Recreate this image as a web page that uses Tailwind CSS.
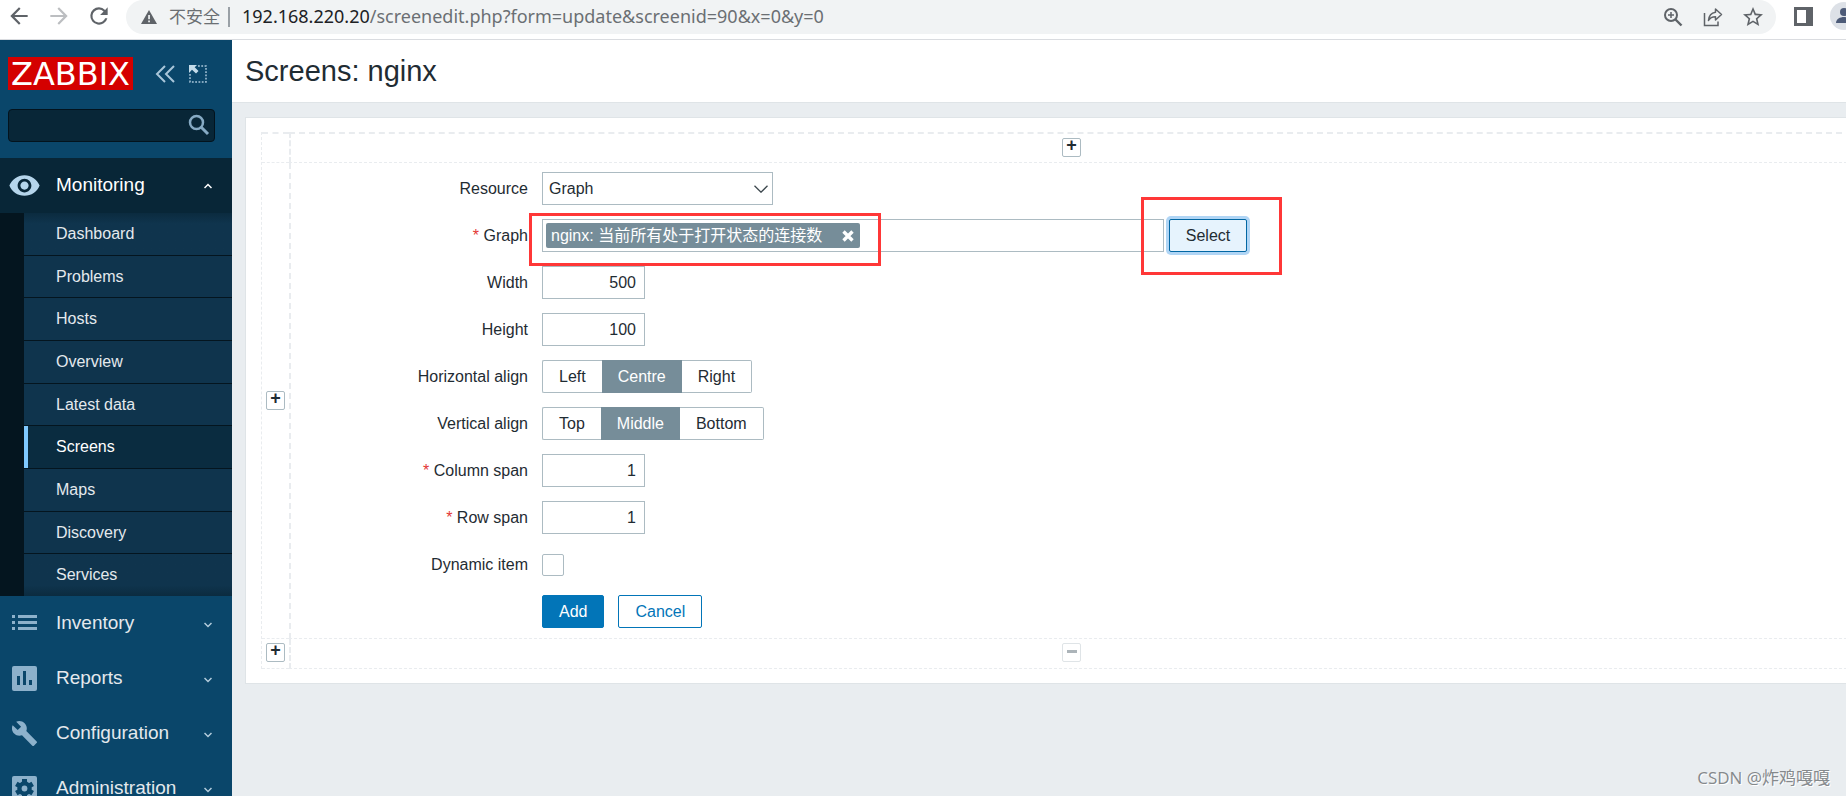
<!DOCTYPE html>
<html lang="en">
<head>
    <meta charset="UTF-8">
    <meta name="viewport" content="width=device-width, initial-scale=1.0">
    <title>Screens: nginx</title>
    <script src="https://cdn.jsdelivr.net/npm/@tailwindcss/browser@4"></script>
</head>
<body class="h-screen flex flex-col overflow-hidden bg-white text-[16px] text-[#1f2c33] font-['Liberation_Sans','Noto_Sans_CJK_SC',sans-serif]">

    <!-- Browser toolbar -->
    <div class="flex items-start h-10 shrink-0 border-b border-[#dadce0] bg-white overflow-hidden font-['Noto_Sans','Noto_Sans_CJK_SC',sans-serif]">
        <div class="flex items-center gap-[14px] w-[126px] h-8 pl-[6px] shrink-0 text-[#5f6368]">
            <button aria-label="Back"><svg class="w-[26px] h-[26px]" viewBox="0 0 24 24" fill="currentColor"><path d="M20 11H7.83l5.59-5.59L12 4l-8 8 8 8 1.41-1.41L7.83 13H20v-2z"/></svg></button>
            <button aria-label="Forward" class="text-[#bcbec1]"><svg class="w-[26px] h-[26px]" viewBox="0 0 24 24" fill="currentColor"><path d="M12 4l-1.41 1.41L16.17 11H4v2h12.17l-5.58 5.59L12 20l8-8z"/></svg></button>
            <button aria-label="Reload"><svg class="w-[26px] h-[26px]" viewBox="0 0 24 24" fill="currentColor"><path d="M17.65 6.35A7.96 7.96 0 0 0 12 4a8 8 0 1 0 7.73 10h-2.08A6 6 0 1 1 12 6c1.66 0 3.14.69 4.22 1.78L13 11h7V4l-2.35 2.35z"/></svg></button>
        </div>
        <div class="flex items-center flex-1 h-[34px] pl-[15px] pr-[11px] rounded-full bg-[#f1f3f4] text-[18px] text-[#6b6f73]">
            <svg class="w-4 h-4 shrink-0" viewBox="0 0 16 16"><path fill="#5f6368" d="M8 1l8 14H0z"/><path fill="#f1f3f4" d="M7.2 6h1.7v4.300H7.2zM7.2 11.500h1.7v1.7H7.200z"/></svg>
            <span class="ml-3 text-[17px]">不安全</span>
            <span class="w-[2px] h-5 ml-2 mr-3 bg-[#9aa0a6]"></span>
            <span class="flex-1 pb-[2px] whitespace-nowrap"><span class="text-[#202124]">192.168.220.20</span>/screenedit.php?form=update&amp;screenid=90&amp;x=0&amp;y=0</span>
            <div class="flex gap-4 text-[#5f6368]">
                <button aria-label="Zoom"><svg class="w-6 h-6" viewBox="0 0 24 24" fill="none" stroke="currentColor" stroke-width="2"><circle cx="10" cy="10" r="6"/><path stroke-width="2.400" d="M14.500 14.500l6 6"/><path stroke-width="1.500" d="M7 10h6M10 7v6"/></svg></button>
                <button aria-label="Share"><svg class="w-6 h-6" viewBox="0 0 24 24" fill="none" stroke="currentColor" stroke-width="1.500"><path d="M3.500 8v12.500h13.500v-4"/><path stroke-linejoin="round" d="M14.500 4l6 5.500-6 5.500v-3.300c-3.500 0-5.500 1-7 3.800.4-4.500 2.500-7.500 7-8.200z"/></svg></button>
                <button aria-label="Bookmark"><svg class="w-6 h-6" viewBox="0 0 24 24" fill="currentColor"><path d="M22 9.240l-7.190-.62L12 2 9.190 8.630 2 9.240l5.460 4.730L5.820 21 12 17.270 18.180 21l-1.630-7.030L22 9.240zM12 15.400l-3.760 2.270 1-4.280-3.320-2.880 4.380-.38L12 6.100l1.710 4.040 4.380.38-3.320 2.880 1 4.280L12 15.400z"/></svg></button>
            </div>
        </div>
        <div class="flex items-center gap-[17px] w-[70px] h-8 pl-[18px] shrink-0">
            <button aria-label="Side panel" class="shrink-0"><svg class="w-[19px] h-[19px]" viewBox="0 0 19 19"><path fill="#5f6368" d="M0 0h19v19H0z"/><path fill="#fff" d="M3 3h9v13H3z"/></svg></button>
            <button aria-label="Profile" class="shrink-0"><svg class="w-7 h-7" viewBox="0 0 28 28"><circle cx="14" cy="14" r="14" fill="#dde1e7"/><circle cx="14" cy="10" r="4" fill="#4d5b78"/><path fill="#4d5b78" d="M6 21c0-4 4-6 8-6s8 2 8 6z"/></svg></button>
        </div>
    </div>

    <div class="flex flex-1 min-h-0">
        <!-- Sidebar -->
        <aside class="w-[232px] shrink-0 overflow-hidden bg-[#0a466a] text-[#e4e9ed]">
            <div class="flex items-center pt-[17px] pl-2">
                <a href="#" class="flex items-center justify-center w-[125px] h-[33px] pt-[2px] bg-[#d40000] text-white text-[32px] leading-[31px] font-['DejaVu_Sans',sans-serif]">ZABBIX</a>
                <button aria-label="Collapse" class="ml-[22px]"><svg class="w-5 h-5" viewBox="0 0 20 20" fill="none" stroke="#a9c6da" stroke-width="2"><path d="M10 2L2 10l8 8M19 2l-8 8 8 8"/></svg></button>
                <button aria-label="Hide sidebar" class="ml-[14px]"><svg class="w-[18px] h-[18px]" viewBox="0 0 18 18"><path fill="none" stroke="#a9c6da" stroke-width="1.500" stroke-dasharray="1.800 1.500" d="M9 1h8v16H1V9"/><path fill="#c4dbe9" d="M0 0h8L5.700 2.300 9.500 6 7 8.500 3 4.800 0 8z"/></svg></button>
            </div>
            <form class="relative mt-[19px] ml-2 mr-[17px]">
                <input type="text" aria-label="Search" class="block w-full h-[33px] pl-2 pr-9 rounded border border-[#03131d] bg-[#082637] text-white">
                <button type="button" aria-label="Search" class="absolute right-[5px] top-[5px]"><svg class="w-[22px] h-[22px]" viewBox="0 0 22 22" fill="none" stroke="#86aac4"><circle cx="8.500" cy="8.500" r="6.500" stroke-width="2.500"/><path stroke-width="3" d="M13 13l7 7"/></svg></button>
            </form>
            <nav class="mt-4">
                <a href="#" class="flex items-center h-[55px] pl-2 pr-5 bg-[#082637] text-[19px] text-white">
                    <svg class="w-[33px] h-[33px] mr-[15px]" viewBox="0 0 24 24" fill="#b5d5eb"><path d="M12 4.500C7 4.500 2.730 7.610 1 12c1.730 4.390 6 7.500 11 7.500s9.270-3.110 11-7.500c-1.730-4.390-6-7.500-11-7.500zM12 17c-2.760 0-5-2.240-5-5s2.240-5 5-5 5 2.240 5 5-2.240 5-5 5zm0-8c-1.660 0-3 1.340-3 3s1.340 3 3 3 3-1.340 3-3-1.340-3-3-3z"/></svg>
                    <span class="flex-1">Monitoring</span>
                    <svg class="w-2 h-2" viewBox="0 0 8 8" fill="none" stroke="#fff" stroke-width="1.500"><path d="M.5 6L4 2.500 7.500 6"/></svg>
                </a>
                <ul class="flex flex-col h-[383px] pl-6 bg-[#04151f] [&>li]:flex-1 [&>li]:border-b [&>li]:border-[#04151f] [&_a]:flex [&_a]:items-center [&_a]:h-full [&_a]:pl-8">
                    <li class="bg-linear-to-b from-[#0b2b3f] to-[#0f344d] to-25%"><a href="#">Dashboard</a></li>
                    <li class="bg-[#0f344d]"><a href="#">Problems</a></li>
                    <li class="bg-[#0f344d]"><a href="#">Hosts</a></li>
                    <li class="bg-[#0f344d]"><a href="#">Overview</a></li>
                    <li class="bg-[#0f344d]"><a href="#">Latest data</a></li>
                    <li class="bg-[#0a2c40] text-white"><a href="#" class="shadow-[inset_4px_0_0_#7fc9ff]">Screens</a></li>
                    <li class="bg-[#0f344d]"><a href="#">Maps</a></li>
                    <li class="bg-[#0f344d]"><a href="#">Discovery</a></li>
                    <li class="border-b-0! bg-linear-to-t from-[#0b2b3f] to-[#0f344d] to-25%"><a href="#">Services</a></li>
                </ul>
                <a href="#" class="flex items-center h-[55px] pl-3 pr-5 text-[19px]">
                    <svg class="w-[25px] h-[25px] mr-[19px]" viewBox="0 0 25 25" fill="#8db1cb"><path d="M0 4h3v3H0zM6 4h19v3H6zM0 10h3v3H0zM6 10h19v3H6zM0 16h3v3H0zM6 16h19v3H6z"/></svg>
                    <span class="flex-1">Inventory</span>
                    <svg class="w-2 h-2" viewBox="0 0 8 8" fill="none" stroke="#b4cddd" stroke-width="1.500"><path d="M.5 3L4 6.500 7.500 3"/></svg>
                </a>
                <a href="#" class="flex items-center h-[55px] pl-3 pr-5 text-[19px]">
                    <svg class="w-[25px] h-[25px] mr-[19px]" viewBox="0 0 25 25"><rect width="25" height="25" rx="2" fill="#8db1cb"/><path fill="#0a466a" d="M5 10h3v9H5zM11 5h3v14h-3zM17 14h3v5h-3z"/></svg>
                    <span class="flex-1">Reports</span>
                    <svg class="w-2 h-2" viewBox="0 0 8 8" fill="none" stroke="#b4cddd" stroke-width="1.500"><path d="M.5 3L4 6.500 7.500 3"/></svg>
                </a>
                <a href="#" class="flex items-center h-[55px] pl-3 pr-5 text-[19px]">
                    <svg class="w-[25px] h-[25px] mr-[19px]" viewBox="1 1 22 22" fill="#8db1cb"><path d="M22.700 19l-9.100-9.100c.9-2.300.4-5-1.500-6.900-2-2-5-2.400-7.400-1.300L9 6 6 9 1.600 4.700C.4 7.100.9 10.100 2.900 12.100c1.900 1.900 4.600 2.400 6.900 1.500l9.100 9.100c.4.4 1 .4 1.400 0l2.300-2.300c.5-.4.5-1.100.1-1.400z"/></svg>
                    <span class="flex-1">Configuration</span>
                    <svg class="w-2 h-2" viewBox="0 0 8 8" fill="none" stroke="#b4cddd" stroke-width="1.500"><path d="M.5 3L4 6.500 7.500 3"/></svg>
                </a>
                <a href="#" class="flex items-center h-[55px] pl-3 pr-5 text-[19px]">
                    <svg class="w-[25px] h-[25px] mr-[19px]" viewBox="0 0 25 25"><rect width="25" height="25" rx="2" fill="#8db1cb"/><circle cx="12.500" cy="12.500" r="7.200" fill="#0a466a"/><path stroke="#0a466a" stroke-width="5" d="M12.500 3v19M4.300 7.800l16.400 9.400M4.300 17.200l16.400-9.400"/><circle cx="12.500" cy="12.500" r="2.900" fill="#8db1cb"/></svg>
                    <span class="flex-1">Administration</span>
                    <svg class="w-2 h-2" viewBox="0 0 8 8" fill="none" stroke="#b4cddd" stroke-width="1.500"><path d="M.5 3L4 6.500 7.500 3"/></svg>
                </a>
            </nav>
        </aside>

        <!-- Page -->
        <main class="flex-1 min-w-0 overflow-hidden bg-[#e9edf0]">
            <header class="flex items-center h-[63px] px-[13px] pt-[2px] border-b border-[#dfe4e7] bg-white">
                <h1 class="text-[29px]">Screens: nginx</h1>
            </header>

            <div class="mt-[14px] ml-[13px] -mr-[22px] px-[15px] py-[14px] border border-[#dfe4e7] bg-white">
                <div class="grid grid-cols-[27px_1fr] border-l border-dashed border-[#e9ecef]">
                    <div class="h-[31px] border-t-2 border-b border-dashed border-[#e9ecef]"></div>
                    <div class="flex items-center justify-center pb-[2px] border-t-2 border-l-2 border-b border-dashed border-[#e9ecef]">
                        <button aria-label="Add column" class="flex justify-center w-[19px] h-[19px] rounded-xs border border-solid border-[#acbbc2] text-[18px] font-bold leading-[13px]">+</button>
                    </div>

                    <div class="flex items-center justify-center border-b border-dashed border-[#e9ecef]">
                        <button aria-label="Add row" class="flex justify-center w-[19px] h-[19px] rounded-xs border border-solid border-[#acbbc2] text-[18px] font-bold leading-[13px]">+</button>
                    </div>
                    <form class="grid grid-cols-[237px_1fr] auto-rows-[33px] items-center gap-x-[14px] gap-y-[14px] pt-[9px] pb-[10px] border-l-2 border-b border-dashed border-[#e9ecef] [&>label]:text-right [&>span]:text-right">
                        <label for="resource">Resource</label>
                        <div class="relative w-[231px]">
                            <select id="resource" class="block w-full h-[33px] pl-[6px] pr-8 appearance-none border border-solid border-[#acbbc2] bg-white"><option>Graph</option></select>
                            <svg class="absolute right-[5px] top-[13px] w-[14px] h-2 pointer-events-none" viewBox="0 0 14 8" fill="none" stroke="#3c474d" stroke-width="1.300"><path d="M.5.800L7 7.200 13.500.800"/></svg>
                        </div>

                        <label for="graph"><span class="text-[#e33734]">*</span> Graph</label>
                        <div class="relative flex items-center gap-[5px]">
                            <div class="flex items-center w-[622px] h-[33px] px-[3px] border border-solid border-[#acbbc2]">
                                <span class="flex items-center justify-between w-[314px] h-[25px] pl-[5px] pr-[6px] rounded-xs bg-[#768d99] text-white whitespace-nowrap">nginx: 当前所有处于打开状态的连接数
                                    <button type="button" aria-label="Remove"><svg class="w-3 h-3" viewBox="0 0 12 12" stroke="#fff" stroke-width="3.400"><path d="M1.500 1.500l9 9M10.500 1.500l-9 9"/></svg></button>
                                </span>
                                <input id="graph" type="text" class="flex-1 min-w-0 h-full outline-none">
                            </div>
                            <button type="button" class="w-[78px] h-[33px] rounded-xs border border-solid border-[#0267a3] bg-[#e6f3fd] shadow-[0_0_0_3px_#b0d5f5]">Select</button>
                            <!-- Highlight frames -->
                            <div class="absolute -left-[13px] -top-[6px] w-[352px] h-[53px] border-3 border-solid border-[#ff3737] pointer-events-none"></div>
                            <div class="absolute left-[599px] -top-[22px] w-[141px] h-[78px] border-3 border-solid border-[#ff3737] pointer-events-none"></div>
                        </div>

                        <label for="width">Width</label>
                        <input id="width" type="text" value="500" class="w-[103px] h-[33px] px-2 border border-solid border-[#acbbc2] text-right">

                        <label for="height">Height</label>
                        <input id="height" type="text" value="100" class="w-[103px] h-[33px] px-2 border border-solid border-[#acbbc2] text-right">

                        <span id="halign">Horizontal align</span>
                        <div role="radiogroup" aria-labelledby="halign" class="flex [&>label]:flex [&>label]:items-center [&>label]:h-[33px] [&>label]:px-4 [&>label]:border-y [&>label]:border-solid [&>label]:border-[#acbbc2]">
                            <label class="border-l rounded-l-xs"><input type="radio" name="halign" class="sr-only">Left</label>
                            <label class="border-y-[#768d99]! bg-[#768d99] text-white"><input type="radio" name="halign" class="sr-only" checked>Centre</label>
                            <label class="border-r rounded-r-xs"><input type="radio" name="halign" class="sr-only">Right</label>
                        </div>

                        <span id="valign">Vertical align</span>
                        <div role="radiogroup" aria-labelledby="valign" class="flex [&>label]:flex [&>label]:items-center [&>label]:h-[33px] [&>label]:px-4 [&>label]:border-y [&>label]:border-solid [&>label]:border-[#acbbc2]">
                            <label class="border-l rounded-l-xs"><input type="radio" name="valign" class="sr-only">Top</label>
                            <label class="border-y-[#768d99]! bg-[#768d99] text-white"><input type="radio" name="valign" class="sr-only" checked>Middle</label>
                            <label class="border-r rounded-r-xs"><input type="radio" name="valign" class="sr-only">Bottom</label>
                        </div>

                        <label for="colspan"><span class="text-[#e33734]">*</span> Column span</label>
                        <input id="colspan" type="text" value="1" class="w-[103px] h-[33px] px-2 border border-solid border-[#acbbc2] text-right">

                        <label for="rowspan"><span class="text-[#e33734]">*</span> Row span</label>
                        <input id="rowspan" type="text" value="1" class="w-[103px] h-[33px] px-2 border border-solid border-[#acbbc2] text-right">

                        <label for="dynamic">Dynamic item</label>
                        <input id="dynamic" type="checkbox" class="w-[22px] h-[22px] appearance-none rounded-xs border border-solid border-[#acbbc2] bg-white">

                        <div class="col-start-2 flex gap-[14px]">
                            <button type="button" class="h-[33px] px-4 rounded-xs border border-solid border-[#0275b8] bg-[#0275b8] text-white">Add</button>
                            <button type="button" class="h-[33px] px-4 rounded-xs border border-solid border-[#0275b8] bg-white text-[#0275b8]">Cancel</button>
                        </div>
                    </form>

                    <div class="flex items-center justify-center h-[30px] pb-[2px] border-b border-dashed border-[#e9ecef]">
                        <button aria-label="Add row" class="flex justify-center w-[19px] h-[19px] rounded-xs border border-solid border-[#acbbc2] text-[18px] font-bold leading-[13px]">+</button>
                    </div>
                    <div class="flex items-center justify-center pb-[2px] border-l-2 border-b border-dashed border-[#e9ecef]">
                        <button aria-label="Remove column" disabled class="flex justify-center w-[19px] h-[19px] pt-[6px] rounded-xs border border-solid border-[#dfe4e7]"><span class="w-[10px] h-[3px] bg-[#acb4b9]"></span></button>
                    </div>
                </div>
            </div>
        </main>
    </div>

    <div class="absolute right-4 bottom-[6px] text-[17px] text-[#85898c] text-shadow-[1px_1px_0_#ffffff] font-['Open_Sans','Noto_Sans_CJK_SC',sans-serif]">CSDN @炸鸡嘎嘎</div>
</body>
</html>
